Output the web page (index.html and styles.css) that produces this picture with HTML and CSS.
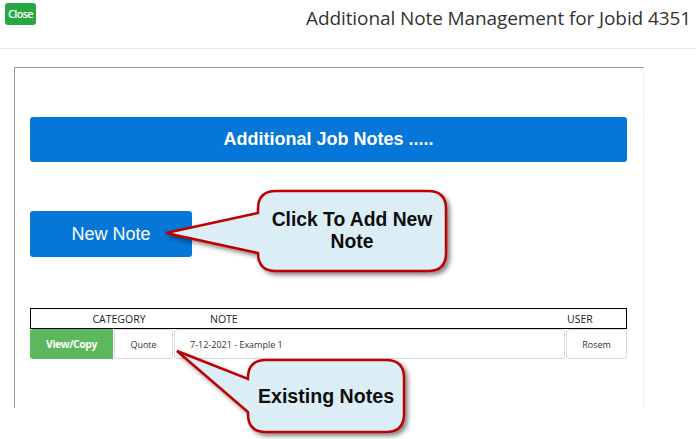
FILE: index.html
```html
<!DOCTYPE html>
<html>
<head>
<meta charset="utf-8">
<link rel="stylesheet" href="styles.css">
</head>
<body>
<header class="topbar">
  <button class="close-btn">Close</button>
  <h1 class="title">Additional Note Management for Jobid 4351</h1>
</header>
<main class="panel">
  <div class="notes-bar">Additional Job Notes .....</div>
  <button class="new-note">New Note</button>
  <div class="table">
    <div class="thead">
      <span class="th th-cat">CATEGORY</span>
      <span class="th th-note">NOTE</span>
      <span class="th th-user">USER</span>
    </div>
    <div class="row">
      <button class="view-btn">View/Copy</button>
      <div class="cell cell-center">Quote</div>
      <div class="cell cell-note">7-12-2021 - Example 1</div>
      <div class="cell cell-center">Rosem</div>
    </div>
  </div>
</main>

<div class="callout callout-new">
  <svg class="callout-shape" width="295" height="95" viewBox="0 0 295 95">
    <path d="M116 6 H268 Q286 6 286 24 V68 Q286 86 268 86 H116 Q98 86 98 68 L6 48 L98 28 V24 Q98 6 116 6 Z"/>
  </svg>
  <div class="callout-text text-new">Click To Add New<br>Note</div>
</div>

<div class="callout callout-existing">
  <svg class="callout-shape" width="260" height="99" viewBox="0 0 260 99">
    <path d="M106 20 H226 Q244 20 244 38 V74 Q244 92 226 92 H106 Q88 92 88 74 V72 L17 11 L88 39 V38 Q88 20 106 20 Z"/>
  </svg>
  <div class="callout-text text-existing">Existing Notes</div>
</div>
</body>
</html>
```

FILE: styles.css
```css
* { box-sizing: border-box; }

html, body {
  margin: 0;
  padding: 0;
  background: #fff;
  width: 696px;
  height: 439px;
  overflow: hidden;
}

body {
  position: relative;
  font-family: "Open Sans", "Liberation Sans", sans-serif;
  color: #222;
}

.topbar {
  display: flex;
  justify-content: space-between;
  align-items: flex-start;
  height: 49px;
  border-bottom: 1px solid #e6e6e6;
}

.close-btn {
  margin: 3px 0 0 5px;
  width: 31px;
  height: 22px;
  padding: 0;
  border: none;
  border-radius: 3px;
  background: #28a745;
  color: #fff;
  font-family: "Open Sans", sans-serif;
  font-weight: 600;
  font-size: 11px;
  letter-spacing: -0.7px;
  line-height: 22px;
}

.title {
  margin: 4px 5px 0 0;
  font-weight: 400;
  font-size: 19px;
  line-height: 28px;
  color: #333;
  letter-spacing: -0.1px;
}

.panel {
  margin: 18px 0 0 14px;
  width: 630px;
  height: 341px;
  border-top: 1px solid #9a9a9a;
  border-left: 1px solid #9a9a9a;
  border-right: 1px solid #ececec;
  padding: 49px 15px 0 15px;
  display: flex;
  flex-direction: column;
  align-items: flex-start;
}

.notes-bar {
  width: 597px;
  height: 45px;
  border-radius: 3px;
  background: #0577d8;
  color: #fff;
  font-family: "Liberation Sans", Arial, sans-serif;
  font-weight: 700;
  font-size: 18px;
  display: flex;
  align-items: center;
  justify-content: center;
}

.new-note {
  margin-top: 49px;
  width: 162px;
  height: 46px;
  border: none;
  border-radius: 3px;
  background: #0577d8;
  color: #fff;
  font-family: "Liberation Sans", Arial, sans-serif;
  font-size: 18px;
  padding: 0;
}

.table {
  margin-top: 51px;
  width: 597px;
}

.thead {
  display: grid;
  grid-template-columns: 176px 1fr 60px;
  height: 21px;
  border: 1px solid #000;
  align-items: center;
  font-size: 10.5px;
  color: #222;
}

.th-cat { text-align: center; }
.th-note { padding-left: 3px; }
.th-user { padding-left: 1px; }

.row {
  display: grid;
  grid-template-columns: 83px 59px 1fr 61px;
  column-gap: 1px;
  height: 30px;
}

.view-btn {
  border: none;
  border-radius: 3px 0 0 3px;
  background: #5cb85c;
  color: #fff;
  font-family: "Open Sans", sans-serif;
  font-weight: 700;
  font-size: 10.5px;
  letter-spacing: -0.5px;
  padding: 0;
}

.cell {
  border: 1px solid #d9d9d9;
  border-radius: 3px;
  display: flex;
  align-items: center;
  font-size: 9px;
  color: #333;
}

.cell-center { justify-content: center; }
.cell-note { padding-left: 15px; }

.callout {
  position: absolute;
}

.callout-new { left: 160px; top: 185px; width: 295px; height: 95px; }
.callout-existing { left: 160px; top: 340px; width: 260px; height: 99px; }

.callout-shape {
  display: block;
  overflow: visible;
  filter: drop-shadow(3px 3px 2px rgba(0, 0, 0, 0.45));
}

.callout-shape path {
  fill: #dbeef5;
  stroke: #c00000;
  stroke-width: 2.5;
  stroke-linejoin: miter;
}

.callout-text {
  position: absolute;
  display: flex;
  align-items: center;
  justify-content: center;
  text-align: center;
  font-family: "Liberation Sans", Arial, sans-serif;
  font-weight: 700;
  color: #0d0d0d;
}

.text-new {
  left: 98px; top: 6px; width: 188px; height: 80px;
  font-size: 19.3px;
  line-height: 22px;
}

.text-existing {
  left: 88px; top: 20px; width: 156px; height: 72px;
  font-size: 19.6px;
  line-height: 22px;
}
```
